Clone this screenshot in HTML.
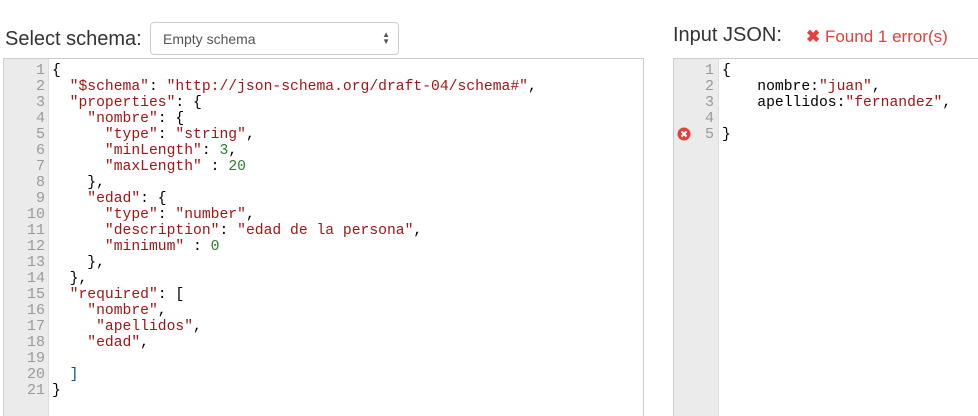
<!DOCTYPE html>
<html style="overflow:hidden;height:416px"><head><style>
body{margin:0;width:978px;height:416px;overflow:hidden;background:#fff;font-family:"Liberation Sans",sans-serif;position:relative}
.lbl{position:absolute;font-size:20px;color:#333}
.sel{position:absolute;left:150px;top:22px;width:249px;height:33px;border:1px solid #ccc;border-radius:4px;box-sizing:border-box;font-size:14px;color:#555;padding:8px 12px;background:#fff}
.arr{position:absolute;right:8px;top:8px;font-size:8px;line-height:7px;color:#555}
.ed{position:absolute;top:58px;height:358px;border:1px solid #ccc;border-bottom:none;box-sizing:border-box;background:#fff;overflow:hidden}
.gut{position:absolute;left:0;top:0;bottom:0;background:#ebebeb;border-right:1px solid #ddd}
pre{margin:0;position:absolute;top:4px;font-family:"Liberation Mono",monospace;font-size:14.7px;line-height:16px;color:#000}
.ln{color:#999;text-align:right;font-size:15px}
.s{color:#a31515}.k{color:#a31515}.n{color:#2e7d32}.b{color:#0b4fa0}
</style></head><body>
<div class="lbl" style="left:5px;top:28px">Select schema:</div>
<div class="sel">Empty schema<div class="arr">▲<br>▼</div></div>
<div class="lbl" style="left:673px;top:24px">Input JSON:</div>
<div style="position:absolute;left:806px;top:27px;font-size:17px;color:#e4403c"><b>✖</b> Found 1 error(s)</div>

<div class="ed" style="left:3px;width:641px">
<div class="gut" style="width:44px"></div>
<pre class="ln" style="left:0;width:41px">1
2
3
4
5
6
7
8
9
10
11
12
13
14
15
16
17
18
19
20
21</pre>
<pre style="left:48px">{
  <span class="k">"$schema"</span>: <span class="s">"http://json-schema.org/draft-04/schema#"</span>,
  <span class="k">"properties"</span>: {
    <span class="k">"nombre"</span>: {
      <span class="k">"type"</span>: <span class="s">"string"</span>,
      <span class="k">"minLength"</span>: <span class="n">3</span>,
      <span class="k">"maxLength"</span> : <span class="n">20</span>
    },
    <span class="k">"edad"</span>: {
      <span class="k">"type"</span>: <span class="s">"number"</span>,
      <span class="k">"description"</span>: <span class="s">"edad de la persona"</span>,
      <span class="k">"minimum"</span> : <span class="n">0</span>
    },
  },
  <span class="k">"required"</span>: [
    <span class="s">"nombre"</span>,
     <span class="s">"apellidos"</span>,
    <span class="s">"edad"</span>,

  <span class="b">]</span>
}</pre>
</div>

<div class="ed" style="left:673px;width:305px;border-right:none">
<div class="gut" style="width:44px"></div>
<svg style="position:absolute;left:3px;top:68px" width="14" height="14"><circle cx="7" cy="7" r="6.5" fill="#e4403c"/><path d="M4.5 4.5L9.5 9.5M9.5 4.5L4.5 9.5" stroke="#fff" stroke-width="2"/></svg>
<pre class="ln" style="left:0;width:40px">1
2
3
4
5</pre>
<pre style="left:48px">{
    nombre:<span class="s">"juan"</span>,
    apellidos:<span class="s">"fernandez"</span>,

}</pre>
</div>
</body></html>
